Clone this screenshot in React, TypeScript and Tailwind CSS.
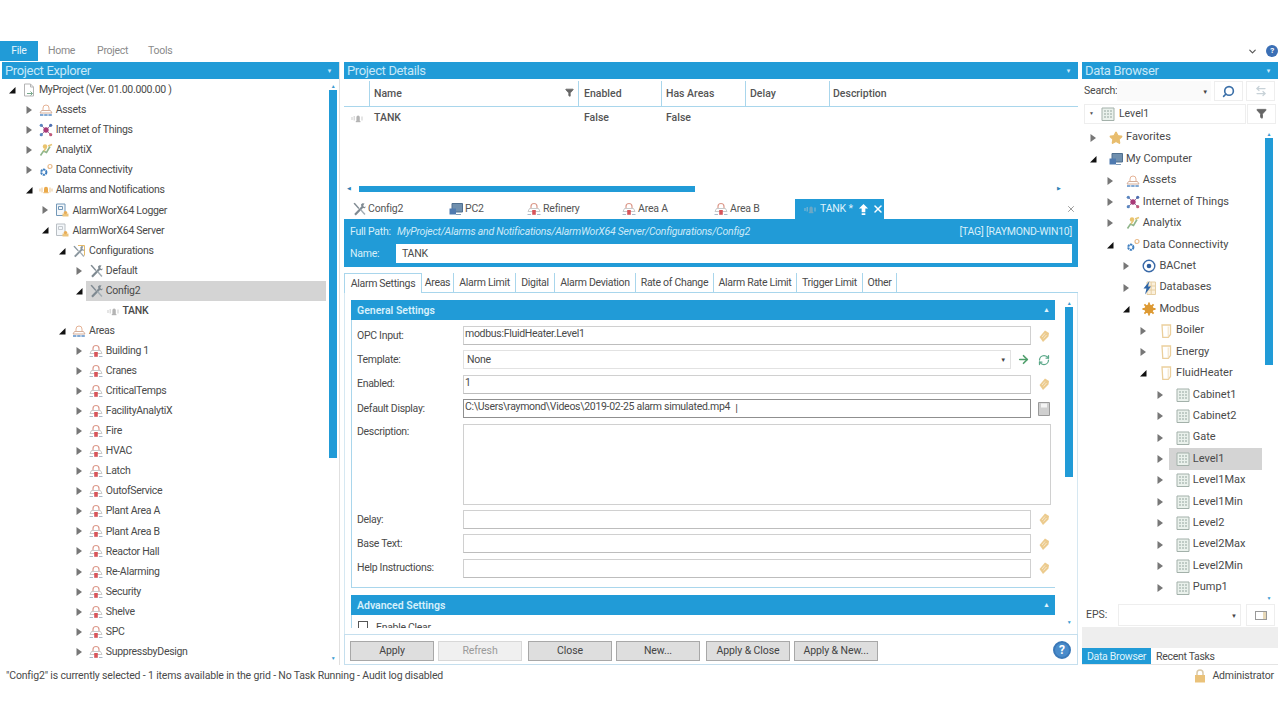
// Project explorer / alarm configuration screen
import React from 'react'
import { Filter, Search, RefreshCw, ArrowRight, ArrowLeftRight, ChevronDown, X, Star } from 'lucide-react'

type IconName =
  | 'doc' | 'asset' | 'area' | 'iot' | 'analytix' | 'data' | 'alarm' | 'logger' | 'server'
  | 'confs' | 'tools' | 'tag' | 'star' | 'pc' | 'bacnet' | 'db' | 'modbus' | 'folder' | 'grid'

function ToolsShape({ color = '#7f8a92' }: { color?: string }) {
  return (
    <>
      {/* wrench */}
      <path d="M12.6 1.6L10.4 1.2 9 2.6l.4 2L2.2 12l1.6 1.4 7.2-7.4 1.9.2 1-1.6-1.7.5-1-1 .6-1.6z" fill={color} />
      {/* screwdriver */}
      <path d="M1.5 1.5l1.3-.8 4.6 5.2-1 1z" fill={color} />
      <path d="M8 8l4.4 5 1.1-1L9 7z" fill="#a3adb4" />
    </>
  )
}

function TreeIcon({ name }: { name: IconName }) {
  switch (name) {
    case 'doc':
      return (
        <svg viewBox="0 0 14 14" className="h-[14px] w-[14px] shrink-0" fill="none">
          <path d="M2.5 1h6l3 3v9h-9z" stroke="#b4b4b4" fill="#fff" />
          <path d="M8.5 1v3h3" stroke="#b4b4b4" />
          <path d="M5 10.5h5.5M8.5 8.5l2 2-2 2" stroke="#79a98c" />
        </svg>
      )
    case 'asset':
      return (
        <svg viewBox="0 0 14 14" className="h-[14px] w-[14px] shrink-0" fill="none">
          <path d="M4 7.5V5a3 3 0 0 1 6 0v2.5" stroke="#e5b295" />
          <path d="M2.5 7.5h9l1.5 2.5H1z" stroke="#d4ae9a" fill="#fff" />
          <path d="M1 12h12" stroke="#5b8fc7" strokeDasharray="3.4 .8" strokeWidth="1.4" />
        </svg>
      )
    case 'area':
      return (
        <svg viewBox="0 0 14 14" className="h-[14px] w-[14px] shrink-0" fill="none">
          <path d="M4 6.5V4.5a3 3 0 0 1 6 0v2" stroke="#dc9a8c" strokeWidth="1.2" />
          <path d="M2.5 6.5h9l1.5 3H1z" stroke="#c9c9c9" fill="#fff" />
          <path d="M.5 12.5h3.5M10 12.5h3.5" stroke="#a9b9ca" />
          <path d="M5.2 8h3.6v4.8H5.2z" fill="#d8555a" />
        </svg>
      )
    case 'iot':
      return (
        <svg viewBox="0 0 14 14" className="h-[14px] w-[14px] shrink-0" fill="none">
          <path d="M2.5 2.5l9 9M11.5 2.5l-9 9" stroke="#9a7aa0" />
          <circle cx="7" cy="7" r="2.7" fill="#a83a78" />
          <circle cx="2.3" cy="2.3" r="1.6" fill="#5a86c0" />
          <circle cx="11.7" cy="2.3" r="1.6" fill="#4f6fb0" />
          <circle cx="2.3" cy="11.7" r="1.6" fill="#5a86c0" />
          <circle cx="11.7" cy="11.7" r="1.6" fill="#c05a7a" />
        </svg>
      )
    case 'analytix':
      return (
        <svg viewBox="0 0 14 14" className="h-[14px] w-[14px] shrink-0" fill="none">
          <path d="M1.5 12.5l3-4.5 3 1.5 3.5-6" stroke="#8fb58a" strokeWidth="1.6" />
          <circle cx="6" cy="3.5" r="2.2" fill="#eac36c" />
          <path d="M9 3l4-1.5" stroke="#e6c678" strokeWidth="1.5" />
          <path d="M5 8l2.5-4" stroke="#e6c678" strokeWidth="1.5" />
        </svg>
      )
    case 'data':
      return (
        <svg viewBox="0 0 14 14" className="h-[14px] w-[14px] shrink-0" fill="none">
          <circle cx="4.8" cy="9.2" r="2.6" stroke="#3f7fc0" strokeWidth="2" strokeDasharray="2.2 .6" />
          <circle cx="11" cy="3.5" r="2" stroke="#e8b987" strokeWidth="1.2" />
        </svg>
      )
    case 'alarm':
      return (
        <svg viewBox="0 0 14 14" className="h-[14px] w-[14px] shrink-0" fill="none">
          <path d="M5 9V5.7a2 2 0 0 1 4 0V9z" fill="#eaa94a" />
          <path d="M4.4 9.2h5.2v1H4.4z" fill="#eaa94a" />
          <path d="M3 4.5v5M1 5.5v3M11 4.5v5M13 5.5v3" stroke="#efd0a6" strokeWidth="1.2" />
        </svg>
      )
    case 'logger':
    case 'server':
      return (
        <svg viewBox="0 0 14 14" className="h-[14px] w-[14px] shrink-0" fill="none">
          <path d="M1.5 1h8.5v11.5H1.5z" stroke={name === 'logger' ? '#7398b8' : '#b9bfc4'} fill="#f4f7fa" />
          <path d="M3.5 3.5h4v3h-4z" stroke={name === 'logger' ? '#7398b8' : '#c4c9ce'} />
          <path d="M7.5 10.5h6v3h-6z" fill="#ecc47c" />
          <circle cx="10.5" cy="9.6" r="1.7" fill="#e9ad55" />
        </svg>
      )
    case 'confs':
      return (
        <svg viewBox="0 0 14 14" className="h-[14px] w-[14px] shrink-0" fill="none">
          <path d="M6 1.5h6.5v10" stroke="#e3b968" />
          <g transform="translate(0 1) scale(.92)">
            <ToolsShape color="#8a969e" />
          </g>
        </svg>
      )
    case 'tools':
      return (
        <svg viewBox="0 0 14 14" className="h-[14px] w-[14px] shrink-0">
          <ToolsShape />
        </svg>
      )
    case 'tag':
      return (
        <svg viewBox="0 0 14 14" className="h-[14px] w-[14px] shrink-0" fill="none">
          <path d="M6.4 10V6.2a1.7 1.7 0 0 1 3.4 0V10z" fill="#b4b4b4" />
          <path d="M5.8 10h4.6v1.2H5.8z" fill="#b4b4b4" />
          <path d="M4.2 5v4.5M2 6v3M12 5.5v4" stroke="#d4d4d4" strokeWidth="1.2" />
        </svg>
      )
    case 'star':
      return <Star className="h-[14px] w-[14px] shrink-0 fill-[#e8bd6e] text-[#e8bd6e]" />
    case 'pc':
      return (
        <svg viewBox="0 0 14 14" className="h-[14px] w-[14px] shrink-0" fill="none">
          <path d="M3 1.5h10.500v8.500H3z" fill="#6f8fae" stroke="#4f6f8f" />
          <path d="M.5 6.5h6.500v6H.5z" fill="#4f7ab0" />
          <path d="M7 12.5h5" stroke="#7f9bb8" />
        </svg>
      )
    case 'bacnet':
      return (
        <svg viewBox="0 0 14 14" className="h-[14px] w-[14px] shrink-0" fill="none">
          <circle cx="7" cy="7" r="5.8" stroke="#3a6aa8" strokeWidth="1.4" />
          <circle cx="7" cy="7" r="2.3" fill="#2f5f9f" />
        </svg>
      )
    case 'db':
      return (
        <svg viewBox="0 0 14 14" className="h-[14px] w-[14px] shrink-0" fill="none">
          <path d="M5 1h8.500v12.500H5z" fill="#fbf0dc" stroke="#e6cfa4" />
          <path d="M5 5h8.500M5 9h8.500M9.2 1v12.500" stroke="#e6cfa4" />
          <path d="M7.5 0L1.5 7.5h3L3 13.500l6-8H6z" fill="#2f66a8" />
        </svg>
      )
    case 'modbus':
      return (
        <svg viewBox="0 0 14 14" className="h-[14px] w-[14px] shrink-0">
          <circle cx="7" cy="7" r="4.6" fill="#dd9a34" />
          <path d="M7 .5v13M.5 7h13M2.4 2.4l9.2 9.2M11.6 2.4l-9.2 9.2" stroke="#dd9a34" strokeWidth="1.8" />
        </svg>
      )
    case 'folder':
      return (
        <svg viewBox="0 0 14 14" className="h-[14px] w-[14px] shrink-0" fill="none">
          <path d="M3 1h8.500v9.500L9.200 13.500H3.800z" stroke="#ebcf9c" fill="#fff" strokeWidth="1.3" />
          <path d="M9.2 2.500v10" stroke="#f2e0bf" />
        </svg>
      )
    case 'grid':
      return (
        <svg viewBox="0 0 14 14" className="h-[14px] w-[14px] shrink-0" fill="none">
          <path d="M1 1h12v12.500H1z" fill="#eaf1ec" stroke="#a3b1aa" />
          <path d="M3 4h2M6 4h2M9 4h2M3 7h2M6 7h2M9 7h2M3 10h2M6 10h2M9 10h2" stroke="#94a69d" strokeWidth="1.2" />
        </svg>
      )
  }
}

type Node = { label: string; depth: number; arrow?: 'open' | 'closed'; icon: IconName; selected?: boolean; bold?: boolean }

const explorerTree: Node[] = [
  { label: 'MyProject (Ver. 01.00.000.00 )', depth: 0, arrow: 'open', icon: 'doc' },
  { label: 'Assets', depth: 1, arrow: 'closed', icon: 'asset' },
  { label: 'Internet of Things', depth: 1, arrow: 'closed', icon: 'iot' },
  { label: 'AnalytiX', depth: 1, arrow: 'closed', icon: 'analytix' },
  { label: 'Data Connectivity', depth: 1, arrow: 'closed', icon: 'data' },
  { label: 'Alarms and Notifications', depth: 1, arrow: 'open', icon: 'alarm' },
  { label: 'AlarmWorX64 Logger', depth: 2, arrow: 'closed', icon: 'logger' },
  { label: 'AlarmWorX64 Server', depth: 2, arrow: 'open', icon: 'server' },
  { label: 'Configurations', depth: 3, arrow: 'open', icon: 'confs' },
  { label: 'Default', depth: 4, arrow: 'closed', icon: 'tools' },
  { label: 'Config2', depth: 4, arrow: 'open', icon: 'tools', selected: true },
  { label: 'TANK', depth: 5, icon: 'tag', bold: true },
  { label: 'Areas', depth: 3, arrow: 'open', icon: 'asset' },
  ...['Building 1', 'Cranes', 'CriticalTemps', 'FacilityAnalytiX', 'Fire', 'HVAC', 'Latch', 'OutofService', 'Plant Area A', 'Plant Area B', 'Reactor Hall', 'Re-Alarming', 'Security', 'Shelve', 'SPC', 'SuppressbyDesign'].map(
    (label): Node => ({ label, depth: 4, arrow: 'closed', icon: 'area' }),
  ),
]

const browserTree: Node[] = [
  { label: 'Favorites', depth: 0, arrow: 'closed', icon: 'star' },
  { label: 'My Computer', depth: 0, arrow: 'open', icon: 'pc' },
  { label: 'Assets', depth: 1, arrow: 'closed', icon: 'asset' },
  { label: 'Internet of Things', depth: 1, arrow: 'closed', icon: 'iot' },
  { label: 'Analytix', depth: 1, arrow: 'closed', icon: 'analytix' },
  { label: 'Data Connectivity', depth: 1, arrow: 'open', icon: 'data' },
  { label: 'BACnet', depth: 2, arrow: 'closed', icon: 'bacnet' },
  { label: 'Databases', depth: 2, arrow: 'closed', icon: 'db' },
  { label: 'Modbus', depth: 2, arrow: 'open', icon: 'modbus' },
  { label: 'Boiler', depth: 3, arrow: 'closed', icon: 'folder' },
  { label: 'Energy', depth: 3, arrow: 'closed', icon: 'folder' },
  { label: 'FluidHeater', depth: 3, arrow: 'open', icon: 'folder' },
  { label: 'Cabinet1', depth: 4, arrow: 'closed', icon: 'grid' },
  { label: 'Cabinet2', depth: 4, arrow: 'closed', icon: 'grid' },
  { label: 'Gate', depth: 4, arrow: 'closed', icon: 'grid' },
  { label: 'Level1', depth: 4, arrow: 'closed', icon: 'grid', selected: true },
  { label: 'Level1Max', depth: 4, arrow: 'closed', icon: 'grid' },
  { label: 'Level1Min', depth: 4, arrow: 'closed', icon: 'grid' },
  { label: 'Level2', depth: 4, arrow: 'closed', icon: 'grid' },
  { label: 'Level2Max', depth: 4, arrow: 'closed', icon: 'grid' },
  { label: 'Level2Min', depth: 4, arrow: 'closed', icon: 'grid' },
  { label: 'Pump1', depth: 4, arrow: 'closed', icon: 'grid' },
]

function Arrow({ kind }: { kind?: 'open' | 'closed' }) {
  if (kind === 'open') {
    return (
      <svg viewBox="0 0 8 8" className="h-2 w-2">
        <path d="M7.500 1v6.500H1z" fill="#111" />
      </svg>
    )
  }
  if (kind === 'closed') {
    return (
      <svg viewBox="0 0 8 10" className="h-[10px] w-2">
        <path d="M1.500 1l5.500 4-5.500 4z" fill="#777" />
      </svg>
    )
  }
  return null
}

function TreeRow({ node, rowClass, innerClass, base }: { node: Node; rowClass: string; innerClass: string; base: number }) {
  return (
    <div className={`flex items-center ${rowClass}`} style={{ paddingLeft: base + node.depth * 16.7 }}>
      <span className="flex w-[14px] shrink-0 items-center justify-center">
        <Arrow kind={node.arrow} />
      </span>
      <span className={`flex h-full flex-1 items-center ${innerClass} ${node.selected ? 'bg-[#d4d4d4]' : ''}`}>
        <TreeIcon name={node.icon} />
        <span className={`whitespace-nowrap ${node.bold ? 'font-medium' : ''}`}>{node.label}</span>
      </span>
    </div>
  )
}

function PanelHeader({ title }: { title: string }) {
  return (
    <div className="flex h-[17px] shrink-0 items-center justify-between bg-[#219bd7] pl-[3px] pr-[7px] text-[13px] tracking-[-0.35px] text-[#c6e8f8]">
      <span>{title}</span>
      <span className="text-[6px] text-[#cbe8f7]">▼</span>
    </div>
  )
}

function ScrollBar({ thumbClass }: { thumbClass: string }) {
  return (
    <div className="flex h-full w-[8px] shrink-0 flex-col items-center">
      <span className="h-[8px] text-[5px] leading-[8px] text-[#3a9bd2]">▲</span>
      <div className={`w-[8px] bg-[#219bd7] ${thumbClass}`} />
      <div className="flex-1" />
      <span className="h-[8px] text-[5px] leading-[8px] text-[#3a9bd2]">▼</span>
    </div>
  )
}

const fileTabs: { label: string; icon: IconName; width: string }[] = [
  { label: 'Config2', icon: 'tools', width: 'w-[97px]' },
  { label: 'PC2', icon: 'pc', width: 'w-[78px]' },
  { label: 'Refinery', icon: 'area', width: 'w-[95px]' },
  { label: 'Area A', icon: 'area', width: 'w-[92px]' },
  { label: 'Area B', icon: 'area', width: 'w-[89px]' },
]

const subTabs: { label: string; width: string }[] = [
  { label: 'Areas', width: 'w-[32px]' },
  { label: 'Alarm Limit', width: 'w-[62px]' },
  { label: 'Digital', width: 'w-[39px]' },
  { label: 'Alarm Deviation', width: 'w-[81px]' },
  { label: 'Rate of Change', width: 'w-[78px]' },
  { label: 'Alarm Rate Limit', width: 'w-[83px]' },
  { label: 'Trigger Limit', width: 'w-[66px]' },
  { label: 'Other', width: 'w-[34px]' },
]

function TagIcon() {
  return (
    <svg viewBox="0 0 12 16" className="h-4 w-3">
      <path d="M1.500 9L7 2.500l4 2.500-.5 3.500L5 14z" fill="#eccb8e" />
      <path d="M4 9l3-3.500M5.500 10.500l3-3.500" stroke="#f7e8cc" />
    </svg>
  )
}

function FormRow({ label, value, after }: { label: string; value?: string; after: React.ReactNode }) {
  return (
    <div className="flex h-[19px] items-center">
      <span className="w-[111px] shrink-0 pl-[5px]">{label}</span>
      <div className="h-full w-[568px] shrink-0 overflow-hidden border border-[#d0d0d0] border-b-[#bdbdbd] pl-[1px] leading-[13px]">{value}</div>
      <div className="flex w-[25px] justify-center pl-[1px]">{after}</div>
    </div>
  )
}

function Btn({ label, disabled, className }: { label: string; disabled?: boolean; className: string }) {
  return (
    <div
      className={`flex h-[20px] w-[84px] shrink-0 items-center justify-center border ${className} ${
        disabled ? 'border-[#d8d8d8] bg-[#f0f0f0] text-[#9a9a9a]' : 'border-[#a8a8a8] bg-[#dedede] text-[#444]'
      }`}
    >
      {label}
    </div>
  )
}

function SectionHead({ title }: { title: string }) {
  return (
    <div className="flex h-[20px] shrink-0 items-center justify-between bg-[#219bd7] px-[6px] pt-[1px] font-semibold tracking-normal text-[#d6f0fb]">
      <span>{title}</span>
      <span className="text-[7px] text-[#e0f3fc]">▲</span>
    </div>
  )
}

export default function App() {
  return (
    <div className="flex h-[720px] w-[1280px] flex-col overflow-hidden bg-white text-[10.5px] text-[#4a4a4a]" style={{ fontFamily: 'Roboto, "Open Sans", sans-serif' }}>
      {/* Ribbon */}
      <div className="mt-[41px] flex h-[20px] shrink-0 items-center tracking-[-0.3px] text-[#8a8a8a]">
        <div className="flex h-full w-[38px] items-center justify-center bg-[#219bd7] text-[#e6f5fc]">File</div>
        <span className="ml-[10px]">Home</span>
        <span className="ml-[22px]">Project</span>
        <span className="ml-[20px]">Tools</span>
        <div className="ml-auto flex items-center gap-[8px] pr-[2px]">
          <ChevronDown className="h-[11px] w-[11px] text-[#555]" strokeWidth={2.5} />
          <span className="flex h-[12px] w-[12px] items-center justify-center rounded-full bg-[#3b6fb5] text-[8px] font-bold text-white">?</span>
        </div>
      </div>

      <div className="flex h-[604px] shrink-0 pt-[1px]">
        {/* Project Explorer */}
        <section className="ml-[2px] flex w-[338px] flex-col border-r border-[#e0e0e0]">
          <PanelHeader title="Project Explorer" />
          <div className="flex min-h-0 flex-1 tracking-[-0.3px]">
            <div className="w-[324px] shrink-0 pt-[1px]">
              {explorerTree.map((n) => (
                <TreeRow key={n.label} node={n} base={3} rowClass="h-[20.07px]" innerClass="gap-[3px] pl-[3px]" />
              ))}
            </div>
            <div className="ml-[3px] pb-[3px] pt-[3px]">
              <ScrollBar thumbClass="h-[368px]" />
            </div>
          </div>
        </section>

        {/* Project Details + editor */}
        <section className="ml-[4px] flex w-[734px] flex-col">
          <PanelHeader title="Project Details" />
          <div className="flex h-[117px] shrink-0 flex-col">
            <div className="mt-[1px] flex h-[27px] shrink-0 items-center border-b border-[#a9d6ec] pr-[10px] pt-[1px] font-medium text-[#555]">
              <div className="h-full w-[26px] border-r border-[#a9d6ec]" />
              <div className="flex h-full w-[209px] items-center justify-between border-r border-[#a9d6ec] px-[4px]">
                Name
                <Filter className="-mt-[3px] h-[9px] w-[9px] fill-[#666] text-[#666]" />
              </div>
              <div className="flex h-full w-[83px] items-center border-r border-[#a9d6ec] pl-[5px]">Enabled</div>
              <div className="flex h-full w-[84px] items-center border-r border-[#a9d6ec] pl-[4px]">Has Areas</div>
              <div className="flex h-full w-[84px] items-center border-r border-[#a9d6ec] pl-[4px]">Delay</div>
              <div className="flex h-full flex-1 items-center pl-[3px]">Description</div>
            </div>
            <div className="mt-[1px] flex h-[20px] items-center font-medium text-[#555]">
              <span className="flex w-[26px] justify-center">
                <TreeIcon name="tag" />
              </span>
              <span className="w-[209px] pl-[4px]">TANK</span>
              <span className="w-[83px] pl-[5px]">False</span>
              <span className="pl-[4px]">False</span>
            </div>
            <div className="mb-[4px] mt-auto flex h-[7px] items-center">
              <span className="w-[15px] pl-[3px] text-[5px] text-[#2d7fb5]">◀</span>
              <div className="h-[6px] w-[336px] bg-[#219bd7]" />
              <span className="ml-auto pr-[17px] text-[5px] text-[#2d7fb5]">▶</span>
            </div>
          </div>

          {/* Open documents */}
          <div className="mt-[3px] flex h-[20px] shrink-0 items-center tracking-[-0.2px] text-[#555]">
            {fileTabs.map((t) => (
              <div key={t.label} className={`flex h-full shrink-0 items-center gap-[2px] pl-[8px] ${t.width}`}>
                <TreeIcon name={t.icon} />
                {t.label}
              </div>
            ))}
            <div className="flex h-full w-[89px] shrink-0 items-center whitespace-nowrap bg-[#219bd7] pl-[8px] text-[#dff2fb]">
              <span className="opacity-50">
                <TreeIcon name="tag" />
              </span>
              <span className="ml-[3px]">TANK *</span>
              <svg viewBox="0 0 12 14" className="ml-[5px] h-[13px] w-[11px]">
                <path d="M6 1l5 5H8v4H4V6H1zM4 11h4v2H4z" fill="#fff" />
              </svg>
              <X className="ml-[3px] h-[12px] w-[12px] text-white" strokeWidth={3} />
            </div>
            <X className="ml-auto mr-[2px] h-[10px] w-[10px] text-[#888]" strokeWidth={2} />
          </div>

          {/* Path and name */}
          <div className="flex h-[48px] shrink-0 flex-col bg-[#219bd7] px-[6px] tracking-[-0.25px] text-[#d8eff9]">
            <div className="flex h-[25px] items-center justify-between">
              <span>
                Full Path: <i className="ml-[4px] text-[#cdeaf8]">MyProject/Alarms and Notifications/AlarmWorX64 Server/Configurations/Config2</i>
              </span>
              <span>[TAG] [RAYMOND-WIN10]</span>
            </div>
            <div className="flex h-[19px] items-center">
              <span className="w-[46px]">Name:</span>
              <div className="flex h-full flex-1 items-center bg-white pl-[6px] text-[#4a4a4a]">TANK</div>
            </div>
          </div>

          {/* Editor tabs */}
          <div className="mt-[6px] flex h-[20px] shrink-0 items-stretch border-b border-[#a9d6ec] tracking-[-0.3px]">
            <div className="flex h-[20px] w-[78px] shrink-0 items-center justify-center border border-b-0 border-[#a9d6ec] bg-white pt-[1px]">Alarm Settings</div>
            {subTabs.map((t) => (
              <div key={t.label} className={`flex shrink-0 items-center justify-center whitespace-nowrap border-r border-[#a9d6ec] pt-[1px] ${t.width}`}>
                {t.label}
              </div>
            ))}
          </div>

          {/* Form */}
          <div className="flex min-h-0 flex-1 border-x border-[#d6e8f2] tracking-[-0.3px]">
            <div className="mb-[6px] w-[710px] shrink-0 overflow-hidden pl-[6px] pt-[7px]">
              <div className="w-[705px]">
                <SectionHead title="General Settings" />
                <div className="flex h-[268px] flex-col gap-[5.4px] border border-t-0 border-[#a9d6ec] pt-[6px]">
                  <FormRow label="OPC Input:" value="modbus:FluidHeater.Level1" after={<TagIcon />} />
                  <div className="flex h-[19px] items-center">
                    <span className="w-[111px] shrink-0 pl-[5px]">Template:</span>
                    <div className="flex h-full w-[548px] shrink-0 items-center justify-between border border-[#e2e2e2] pl-[3px] pr-[4px]">
                      None
                      <span className="text-[6px] text-[#444]">▼</span>
                    </div>
                    <ArrowRight className="ml-[6px] h-[13px] w-[13px] text-[#4e9e6a]" strokeWidth={3} />
                    <RefreshCw className="ml-[8px] h-[12px] w-[12px] text-[#5ba889]" strokeWidth={2.5} />
                  </div>
                  <FormRow label="Enabled:" value="1" after={<TagIcon />} />
                  <div className="flex h-[19px] items-center">
                    <span className="w-[111px] shrink-0 pl-[5px]">Default Display:</span>
                    <div className="flex h-full w-[568px] shrink-0 items-center border border-[#8f8f8f] pl-[1px]">
                      <span className="-mt-[3px] whitespace-nowrap">C:\Users\raymond\Videos\2019-02-25 alarm simulated.mp4</span>
                      <span className="ml-[5px] text-[12px] font-light leading-none text-[#333]">I</span>
                    </div>
                    <div className="flex w-[25px] justify-center pl-[1px]">
                      <svg viewBox="0 0 12 14" className="h-[14px] w-[12px]">
                        <path d="M.5.500h11v13H.5z" fill="#cfcfcf" stroke="#9a9a9a" />
                        <path d="M3 1.500h6v4H3z" fill="#f4f4f4" />
                      </svg>
                    </div>
                  </div>
                  <div className="flex h-[81px] shrink-0">
                    <span className="w-[111px] shrink-0 pl-[5px]">Description:</span>
                    <div className="h-full w-[588px] shrink-0 border border-[#d0d0d0]" />
                  </div>
                  <FormRow label="Delay:" after={<TagIcon />} />
                  <FormRow label="Base Text:" after={<TagIcon />} />
                  <FormRow label="Help Instructions:" after={<TagIcon />} />
                </div>
                <div className="mt-[7px]">
                  <SectionHead title="Advanced Settings" />
                  <div className="flex h-[20px] border-x border-[#a9d6ec] pl-[6px] pt-[6px]">
                    <span className="h-[10px] w-[10px] shrink-0 border border-[#555]" />
                    <span className="ml-[8px] leading-[14px]">Enable Clear</span>
                  </div>
                </div>
              </div>
            </div>
            <div className="ml-[10px] pb-[8px] pt-[6px]">
              <ScrollBar thumbClass="h-[170px]" />
            </div>
          </div>

          {/* Actions */}
          <div className="flex h-[31px] shrink-0 items-start border border-[#c5dfee] pl-[5px] pt-[6px] tracking-[-0.1px]">
            <Btn label="Apply" className="" />
            <Btn label="Refresh" disabled className="ml-[4px]" />
            <Btn label="Close" className="ml-[6px]" />
            <Btn label="New..." className="ml-[4px]" />
            <Btn label="Apply & Close" className="ml-[6px]" />
            <Btn label="Apply & New..." className="ml-[4px]" />
            <span className="ml-auto mr-[6px] flex h-[18px] w-[18px] items-center justify-center rounded-full border-2 border-[#3a78b8] bg-[#4a8ccb] text-[12px] font-bold text-white">?</span>
          </div>
        </section>

        {/* Data Browser */}
        <section className="ml-[4px] flex w-[196px] flex-col text-[11px]">
          <PanelHeader title="Data Browser" />
          <div className="flex h-[23px] shrink-0 items-center pl-[2px] pt-[1px] text-[10.5px] tracking-[-0.2px]">
            <span className="w-[33px]">Search:</span>
            <div className="flex h-[20px] w-[94px] items-center justify-end bg-[#fafafa] pr-[3px]">
              <span className="text-[6px] text-[#444]">▼</span>
            </div>
            <div className="ml-[3px] flex h-[20px] w-[29px] items-center justify-center border border-[#eee]">
              <Search className="h-[13px] w-[13px] scale-x-[-1] text-[#3a6fa8]" strokeWidth={3} />
            </div>
            <div className="ml-[3px] flex h-[20px] w-[29px] items-center justify-center border border-[#eee]">
              <ArrowLeftRight className="h-[12px] w-[12px] text-[#c8d2d8]" strokeWidth={2.5} />
            </div>
          </div>
          <div className="flex h-[23px] shrink-0 items-center pl-[2px] text-[10.5px]">
            <div className="flex h-[20px] w-[162px] items-center border border-[#eee] pl-[4px]">
              <span className="mr-[7px] text-[5px] text-[#555]">▼</span>
              <TreeIcon name="grid" />
              <span className="ml-[4px]">Level1</span>
            </div>
            <div className="ml-[1px] flex h-[20px] w-[29px] items-center justify-center border border-[#eee]">
              <Filter className="h-[11px] w-[11px] fill-[#666] text-[#666]" />
            </div>
          </div>
          <div className="flex min-h-0 flex-1">
            <div className="w-[180px] shrink-0 pt-[2px]">
              {browserTree.map((n) => (
                <TreeRow key={n.label} node={n} base={4} rowClass="h-[21.43px]" innerClass="ml-[2px] gap-[3px] pl-[7px]" />
              ))}
            </div>
            <div className="ml-[3px] pb-[1px] pt-[5px]">
              <ScrollBar thumbClass="h-[227px]" />
            </div>
          </div>
          <div className="flex h-[24px] shrink-0 items-center pl-[4px] text-[10.5px]">
            <span className="w-[32px]">EPS:</span>
            <div className="flex h-[22px] w-[123px] items-center justify-end border border-[#eee] pr-[3px]">
              <span className="text-[6px] text-[#444]">▼</span>
            </div>
            <div className="ml-[5px] flex h-[22px] w-[29px] items-center justify-center border border-[#eee]">
              <span className="flex h-[9px] w-[12px] justify-end border border-[#999]">
                <span className="w-[3px] bg-[#e8d9b8]" />
              </span>
            </div>
          </div>
          <div className="h-[21px] shrink-0 bg-[#eeeeee]" />
          <div className="flex h-[17px] shrink-0 items-center border-b border-[#e4e4e4] text-[10.5px] tracking-[-0.3px]">
            <div className="flex h-full w-[69px] items-center justify-center bg-[#219bd7] pt-[1px] text-[#dff2fb]">Data Browser</div>
            <span className="ml-[5px] pt-[2px]">Recent Tasks</span>
          </div>
        </section>
      </div>

      {/* Status bar */}
      <div className="flex h-[21px] shrink-0 items-center px-[6px] tracking-[-0.16px]">
        <span>"Config2" is currently selected - 1 items available in the grid - No Task Running - Audit log disabled</span>
        <svg viewBox="0 0 12 14" className="ml-auto h-[14px] w-[12px]">
          <path d="M3 6V4a3 3 0 0 1 6 0v2" stroke="#d9c9a8" strokeWidth="1.5" fill="none" />
          <path d="M1 6h10v7.500H1z" fill="#eac27a" />
        </svg>
        <span className="ml-[6px]">Administrator</span>
      </div>
    </div>
  )
}
